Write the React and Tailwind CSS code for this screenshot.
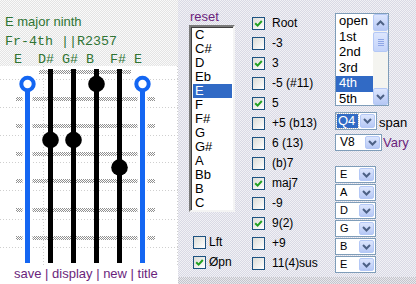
import React from "react";

const notes = ["C", "C#", "D", "Eb", "E", "F", "F#", "G", "G#", "A", "Bb", "B", "C"];
const intervals = [
  ["Root", true],
  ["-3", false],
  ["3", true],
  ["-5 (#11)", false],
  ["5", true],
  ["+5 (b13)", false],
  ["6 (13)", false],
  ["(b)7", false],
  ["maj7", true],
  ["-9", false],
  ["9(2)", true],
  ["+9", false],
  ["11(4)sus", false],
];
const frets = ["open", "1st", "2nd", "3rd", "4th", "5th"];
const tuning = ["E", "A", "D", "G", "B", "E"];

const Check = ({ on }) => (
  <span className="w-[13px] h-[13px] shrink-0 border border-[#1c5180] bg-gradient-to-br from-[#dcdcd7] to-white flex items-center justify-center">
    {on && (
      <svg width="9" height="9" viewBox="0 0 9 9">
        <path d="M1.2 4.2 L3.6 6.6 L7.8 2" stroke="#21a121" strokeWidth="2" fill="none" />
      </svg>
    )}
  </span>
);

const Arrow = ({ up }) => (
  <svg width="9" height="6" viewBox="0 0 9 6">
    <path d={up ? "M1 5 L4.5 1.5 L8 5" : "M1 1 L4.5 4.5 L8 1"} stroke="#4d6185" strokeWidth="2" fill="none" />
  </svg>
);

const DropBtn = ({ className }) => (
  <span className={"w-[15px] shrink-0 rounded-[2px] border border-[#b4c8f6] bg-gradient-to-b from-[#dde6fd] to-[#b6c8f5] flex items-center justify-center " + className}>
    <Arrow />
  </span>
);

const App = () => {
  return (
    <div className="w-[416px] h-[284px] flex overflow-hidden font-['Liberation_Sans',sans-serif] text-black">
      {/* Chord diagram */}
      <div className="w-[178px] h-[284px] bg-white flex flex-col">
        <div className="h-[66px] pt-[14px] text-[#2f7433] bg-[repeating-conic-gradient(#e4e4e4_0_25%,#fafafa_0_50%)] bg-[length:2px_2px]">
          <div className="pl-[5px] text-[13px] leading-[16px]">E major ninth</div>
          <div className="pl-[5px] mt-[4px] font-['Liberation_Mono',monospace] text-[13.33px] leading-[16px] whitespace-pre">Fr-4th ||R2357</div>
          <div className="pl-[6px] mt-[2px] font-['Liberation_Mono',monospace] text-[13.33px] leading-[16px] whitespace-pre"> E  D# G# B  F# E</div>
        </div>
        <svg width="178" height="200" viewBox="0 66 178 200" className="block">
          <defs>
            <pattern id="dith" width="2" height="2" patternUnits="userSpaceOnUse">
              <rect width="2" height="2" fill="#ffffff" />
              <rect width="1" height="1" fill="#909090" />
              <rect x="1" y="1" width="1" height="1" fill="#909090" />
            </pattern>
          </defs>
          {[79, 107, 135, 162, 190, 219, 247].map((y) => (
            <line key={y} x1="0" x2="178" y1={y + 0.5} y2={y + 0.5} stroke="#cfcfcf" strokeDasharray="1 2" />
          ))}
          <line x1="43.5" x2="43.5" y1="66" y2="266" stroke="#cfcfcf" strokeDasharray="1 2" />
          <line x1="177.5" x2="177.5" y1="66" y2="266" stroke="#cfcfcf" strokeDasharray="1 2" />
          <rect x="39" y="70" width="92" height="4" fill="url(#dith)" />
          {[97, 124, 152, 179, 208, 236].map((y) => (
            <rect key={y} x="16" y={y} width="139" height="4" fill="url(#dith)" />
          ))}
          {[48, 71, 94, 117].map((x) => (
            <rect key={x} x={x} y="69" width="5" height="194" fill="#000" />
          ))}
          {[27.5, 142.5].map((x) => (
            <g key={x}>
              <rect x={x - 5} y="90" width="10" height="173" fill="#fff" />
              <rect x={x - 2.5} y="88" width="5" height="175" fill="#1466f2" />
              <circle cx={x} cy="84" r="6.2" fill="#fff" stroke="#1466f2" strokeWidth="4" />
            </g>
          ))}
          <circle cx="96.5" cy="84" r="8.3" fill="#000" />
          <circle cx="50.5" cy="140" r="8.3" fill="#000" />
          <circle cx="73.5" cy="140" r="8.3" fill="#000" />
          <circle cx="119.5" cy="167.5" r="8.3" fill="#000" />
        </svg>
        <div className="pl-[14px] text-[13px] leading-[15px] text-[#6b1f7c] whitespace-pre">save | display | new | title</div>
      </div>

      {/* Controls */}
      <div className="flex-1 h-[284px] flex flex-col bg-[repeating-conic-gradient(#d9d9e5_0_25%,#f1f1f5_0_50%)] bg-[length:2px_2px]">
        <div className="flex flex-1">
          {/* Root note */}
          <div className="w-[64px] pl-[11px] pt-[9px]">
            <div className="h-[16px] leading-[16px] text-[13px] text-[#6b1f7c] pl-[1px]">reset</div>
            <div className="w-[46px] h-[187px] border-2 border-t-[#7a7a7a] border-l-[#7a7a7a] border-b-[#f4f4f4] border-r-[#f4f4f4] bg-white">
              <div className="h-full border-t border-l border-[#404040] px-[1px]">
                {notes.map((n, i) => (
                  <div
                    key={i}
                    className={
                      i === 4
                        ? "h-[14px] leading-[14px] text-[13px] pl-[2px] bg-[#316ac5] text-white"
                        : "h-[14px] leading-[14px] text-[13px] pl-[2px]"
                    }
                  >
                    {n}
                  </div>
                ))}
              </div>
            </div>
            <div className="mt-[20px] pl-[4px] text-[12px]">
              <div className="h-[20px] flex items-center gap-[3px]">
                <Check on={false} />
                <span>Lft</span>
              </div>
              <div className="h-[20px] flex items-center gap-[3px]">
                <Check on={true} />
                <span>Øpn</span>
              </div>
            </div>
          </div>

          {/* Intervals */}
          <div className="w-[88px] pl-[10px] pt-[13px] text-[12px]">
            {intervals.map(([label, on]) => (
              <div key={label} className="h-[20px] flex items-center gap-[7px] whitespace-nowrap">
                <Check on={on} />
                <span>{label}</span>
              </div>
            ))}
          </div>

          {/* Fret / tuning */}
          <div className="flex-1 pl-[5px] pt-[13px]">
            <div className="w-[54px] h-[93px] border border-[#7f9db9] bg-white flex overflow-hidden">
              <div className="flex-1">
                {frets.map((f, i) => (
                  <div
                    key={f}
                    className={
                      i === 4
                        ? "h-[15.6px] leading-[14px] text-[13px] pl-[3px] bg-[#316ac5] text-white"
                        : "h-[15.6px] leading-[14px] text-[13px] pl-[3px]"
                    }
                  >
                    {f}
                  </div>
                ))}
              </div>
              <div className="w-[15px] flex flex-col bg-[#f4f4f0]">
                <span className="h-[17px] rounded-[2px] border border-[#b4c8f6] bg-gradient-to-b from-[#dde6fd] to-[#b6c8f5] flex items-center justify-center">
                  <Arrow up />
                </span>
                <span className="h-[20px] mt-[1px] rounded-[2px] border border-[#b4c8f6] bg-gradient-to-b from-[#dde6fd] to-[#c3d3fa] flex flex-col items-center justify-center gap-[1px]">
                  <span className="w-[6px] h-[1px] bg-[#8ea6e6]" />
                  <span className="w-[6px] h-[1px] bg-[#8ea6e6]" />
                  <span className="w-[6px] h-[1px] bg-[#8ea6e6]" />
                  <span className="w-[6px] h-[1px] bg-[#8ea6e6]" />
                </span>
                <span className="flex-1" />
                <span className="h-[17px] rounded-[2px] border border-[#b4c8f6] bg-gradient-to-b from-[#dde6fd] to-[#b6c8f5] flex items-center justify-center">
                  <Arrow />
                </span>
              </div>
            </div>

            <div className="mt-[6px] flex items-end gap-[2px]">
              <div className="w-[42px] h-[18px] border border-[#7f9db9] bg-white flex p-[1px] gap-[2px]">
                <span className="w-[22px] bg-[#316ac5] text-white text-[13px] leading-[14px] pl-[1px] outline outline-1 outline-dotted outline-[#c0c0c0]">Q4</span>
                <DropBtn className="ml-auto" />
              </div>
              <span className="text-[13px] leading-[14px]">span</span>
            </div>

            <div className="mt-[4px] flex items-center gap-[1px]">
              <div className="w-[47px] h-[17px] border border-[#7f9db9] bg-white flex p-[1px]">
                <span className="flex-1 text-[12px] leading-[13px] pl-[3px]">V8</span>
                <DropBtn className="" />
              </div>
              <span className="text-[13px] leading-[14px] text-[#6b1f7c]">Vary</span>
            </div>

            <div className="mt-[15px] flex flex-col gap-[1px]">
              {tuning.map((t, i) => (
                <div key={i} className="w-[41px] h-[17px] border border-[#7f9db9] bg-white flex p-[1px]">
                  <span className="flex-1 text-[11px] leading-[13px] pl-[3px]">{t}</span>
                  <DropBtn className="" />
                </div>
              ))}
            </div>
          </div>
        </div>
        <div className="h-[7px] bg-[repeating-conic-gradient(#c4c4cc_0_25%,#e8e8ec_0_50%)] bg-[length:2px_2px]" />
      </div>
    </div>
  );
};

export default App;
